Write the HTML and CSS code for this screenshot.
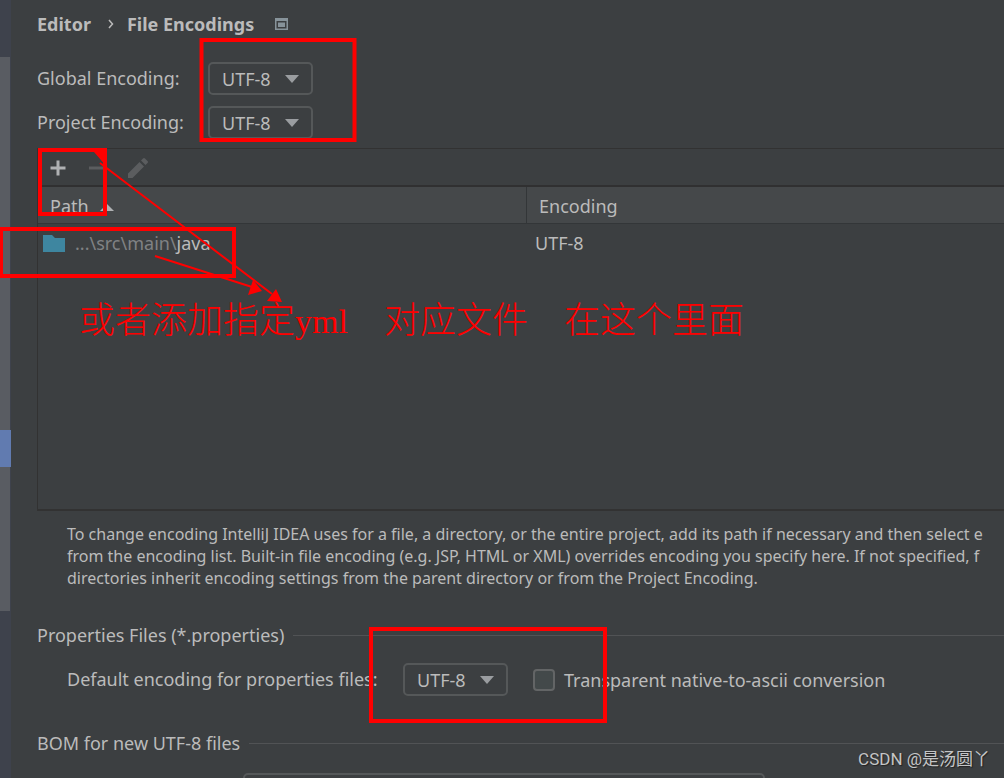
FILE: index.html
```html
<!DOCTYPE html>
<html lang="en">
<head>
<meta charset="UTF-8" />
<meta name="viewport" content="width=device-width, initial-scale=1" />
<title>File Encodings</title>
<link rel="stylesheet" href="styles.css">
</head>
<body>

<div class="settings">
  <aside class="tree">
    <div class="tree-thumb"><div class="tree-selected"></div></div>
  </aside>

  <main class="page">
    <h1 class="breadcrumb">
      <span>Editor</span>
      <svg class="crumb-arrow" width="6" height="10" viewBox="0 0 6 10"><path d="M1 1l3.500 4L1 9" fill="none" stroke="#bbb" stroke-width="1.500"/></svg>
      <span>File Encodings</span>
      <svg class="crumb-icon" width="13" height="12" viewBox="0 0 13 12"><path d="M0 0h13v12H0z" fill="#87939a"/><path d="M1.500 3h10v7.500h-10z" fill="#3c3f41"/><path d="M3 4.500h7v4.500H3z" fill="#87939a"/></svg>
    </h1>

    <div class="form">
      <label for="global-encoding">Global Encoding:</label>
      <div class="combo">
        <select id="global-encoding"><option>UTF-8</option></select>
        <svg class="combo-arrow" width="14" height="8" viewBox="0 0 14 8"><path d="M0 0h14L7 8z"/></svg>
      </div>
      <label for="project-encoding">Project Encoding:</label>
      <div class="combo">
        <select id="project-encoding"><option>UTF-8</option></select>
        <svg class="combo-arrow" width="14" height="8" viewBox="0 0 14 8"><path d="M0 0h14L7 8z"/></svg>
      </div>
    </div>

    <section class="panel">
      <div class="toolbar">
        <button type="button" aria-label="Add"><svg width="16" height="16" viewBox="0 0 16 16"><path d="M6.500 0.500h3v6h6v3h-6v6h-3v-6h-6v-3h6z" fill="#afb1b3"/></svg></button>
        <button type="button" aria-label="Remove" disabled><svg width="16" height="16" viewBox="0 0 16 16"><path d="M0 6.500h16v3H0z" fill="#5b5d5f"/></svg></button>
        <button type="button" aria-label="Edit" disabled><svg width="20" height="20" viewBox="0 0 20 20"><path d="M0 15.500L11.500 4l4.500 4.500L4.500 20H0zM13 2.500L15 .5q1-1 2 0L19.500 3q1 1 0 2l-2 2z" fill="#5b5d5f"/></svg></button>
      </div>
      <table class="paths">
        <thead>
          <tr>
            <th>Path <svg class="sort" width="14" height="7" viewBox="0 0 14 7"><path d="M0 7h14L7 0z" fill="#afb1b3"/></svg></th>
            <th>Encoding</th>
          </tr>
        </thead>
        <tbody>
          <tr>
            <td><div class="path"><svg width="22" height="17" viewBox="0 0 22 17"><path d="M0 0h9l3 3h10v14H0z" fill="#3e86a0"/></svg><span><span class="dim">...\src\main\</span>java</span></div></td>
            <td>UTF-8</td>
          </tr>
        </tbody>
      </table>
    </section>

    <p class="help">To change encoding IntelliJ IDEA uses for a file, a directory, or the entire project, add its path if necessary and then select e<br>
      from the encoding list. Built-in file encoding (e.g. JSP, HTML or XML) overrides encoding you specify here. If not specified, f<br>
      directories inherit encoding settings from the parent directory or from the Project Encoding.</p>

    <h2 class="group">Properties Files (*.properties)</h2>
    <div class="row">
      <label class="row-label" for="properties-encoding">Default encoding for properties files:</label>
      <div class="combo">
        <select id="properties-encoding"><option>UTF-8</option></select>
        <svg class="combo-arrow" width="14" height="8" viewBox="0 0 14 8"><path d="M0 0h14L7 8z"/></svg>
      </div>
      <input type="checkbox" id="native-ascii">
      <label for="native-ascii">Transparent native-to-ascii conversion</label>
    </div>

    <h2 class="group">BOM for new UTF-8 files</h2>
    <div class="bom">
      <select aria-label="BOM"><option></option></select>
    </div>
  </main>

  <!-- red marks over the dialog -->
  <svg class="marks" width="1004" height="778" viewBox="0 0 1004 778">
    <g fill="none" stroke="#f00" stroke-width="4">
      <rect x="201.500" y="40" width="153" height="100"/>
      <rect x="40" y="150" width="65" height="64"/>
      <rect x="1" y="229" width="233" height="47"/>
      <rect x="371" y="629" width="234" height="92"/>
    </g>
    <path d="M100 163L272 294M155 256L252 287" fill="none" stroke="#f00" stroke-width="2"/>
    <path d="M94 152h13v15zM282 302l-15-1 9-12zM262 291l-14 4 5-15z" fill="#f00"/>
  </svg>
  <p class="note" lang="zh">或者添加指定<span class="latin">yml</span>　对应文件　在这个里面</p>
  <p class="watermark" lang="zh">CSDN @是汤圆丫</p>
</div>

</body>
</html>
```
FILE: styles.css
```css
* {
  box-sizing: border-box;
}
body {
  margin: 0;
  background: #3c3f41;
  color: #bbb;
  font-family: "Noto Sans", "Noto Sans CJK SC", sans-serif;
  font-size: 18px;
  line-height: 24px;
}
.settings {
  position: relative;
  display: flex;
  height: 100vh;
  overflow: hidden;
}

/* right edge of the settings tree */
.tree {
  flex: none;
  width: 11px;
  padding-top: 57px;
  background: #3e424c;
}
.tree-thumb {
  width: 10px;
  height: 554px;
  padding-top: 373px;
  background: #595c62;
}
.tree-selected {
  width: 11px;
  height: 37px;
  background: #617bb0;
}

.page {
  flex: 1;
  min-width: 0;
  padding: 12px 0 0 26px;
}
.breadcrumb {
  display: flex;
  align-items: center;
  margin: 0 0 26px;
  font-size: 18px;
  font-weight: 700;
}
.crumb-arrow {
  margin: 0 13px 0 17px;
}
.crumb-icon {
  margin-left: 21px;
}

.form {
  display: grid;
  grid-template-columns: 171px auto;
  row-gap: 11px;
  align-items: center;
  justify-content: start;
}
.form label,
.row-label {
  padding-bottom: 2px;
}
.combo {
  position: relative;
  width: 105px;
}
select {
  appearance: none;
  display: block;
  width: 100%;
  height: 33px;
  padding: 0 12px;
  border: 2px solid #555859;
  border-radius: 5px;
  background: #3c3f41;
  color: #bbb;
  font: inherit;
}
.combo-arrow {
  position: absolute;
  right: 14px;
  top: 13px;
  fill: #9a9da0;
  pointer-events: none;
}

.panel {
  height: 363px;
  margin-top: 9px;
  border: solid #323232;
  border-width: 1px 0 2px 1px;
}
.toolbar {
  display: flex;
  align-items: center;
  gap: 23px;
  height: 36px;
  padding: 2px 0 0 12px;
}
.toolbar button {
  display: flex;
  padding: 0;
  border: 0;
  background: none;
}
.paths {
  width: 100%;
  border-collapse: separate;
  border-spacing: 0;
  table-layout: fixed;
  border-top: 2px solid #303031;
}
.paths th {
  height: 37px;
  padding: 2px 12px 0;
  border-bottom: 1px solid #333638;
  background: #45484a;
  font-weight: normal;
  text-align: left;
}
.paths th:first-child {
  width: 489px;
  border-right: 1px solid #333638;
}
.sort {
  margin-left: 7px;
  vertical-align: 2px;
}
.paths td {
  height: 38px;
  padding: 0 8px;
}
.paths td:first-child {
  padding-left: 5px;
}
.path {
  display: flex;
  align-items: center;
  gap: 10px;
}
.dim {
  color: #808284;
}

.help {
  margin: 12px 0 34px;
  padding-left: 30px;
  font-size: 16px;
  line-height: 22px;
  white-space: nowrap;
}

.group {
  display: flex;
  align-items: center;
  gap: 9px;
  margin: 0;
  font-size: 18px;
  font-weight: normal;
}
.group::after {
  content: "";
  flex: 1;
  border-top: 1px solid #515355;
}
.row {
  display: flex;
  align-items: center;
  margin: 16px 0 35px;
  padding-left: 30px;
}
.row-label {
  width: 336px;
}
input[type="checkbox"] {
  appearance: none;
  width: 22px;
  height: 22px;
  margin: 0 9px 0 25px;
  border: 2px solid #636566;
  border-radius: 4px;
  background: #43494a;
}
.bom {
  width: 522px;
  margin: 18px 0 0 206px;
}

/* annotations */
.marks {
  position: absolute;
  left: 0;
  top: 0;
  pointer-events: none;
}
.note {
  position: absolute;
  left: 79px;
  top: 299px;
  margin: 0;
  color: #f00;
  font-family: "Liberation Serif", "Noto Sans CJK SC", serif;
  font-size: 36px;
  font-weight: 300;
  line-height: 44px;
  white-space: nowrap;
}
.latin {
  font-size: 34px;
}
.watermark {
  position: absolute;
  right: 14px;
  bottom: 7px;
  margin: 0;
  color: #c4c5c6;
  font-family: Roboto, "Noto Sans CJK SC", sans-serif;
  font-size: 17px;
  text-shadow: 1px 1px 1px #222;
}
```
